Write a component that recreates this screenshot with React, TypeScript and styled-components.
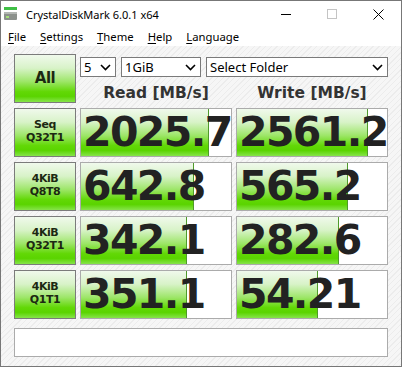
import React from "react"
import styled, { createGlobalStyle } from "styled-components"

const GlobalStyle = createGlobalStyle`
  html, body {
    margin: 0;
    padding: 0;
    background: #ffffff;
  }
  * {
    box-sizing: border-box;
  }
`

const Window = styled.div`
  width: 402px;
  height: 367px;
  border: 1px solid #777777;
  display: flex;
  flex-direction: column;
  background: #ffffff;
  font-family: "Noto Sans", "DejaVu Sans", sans-serif;
  overflow: hidden;
`

const TitleBar = styled.div`
  height: 26px;
  display: flex;
  align-items: center;
  padding-left: 3px;
`

const Title = styled.span`
  font-size: 11px;
  color: #000;
  margin-left: 8px;
  white-space: nowrap;
`

const Controls = styled.div`
  margin-left: auto;
  display: flex;
  height: 100%;
`

const CtrlButton = styled.div`
  width: 46px;
  height: 100%;
  display: flex;
  align-items: center;
  justify-content: center;
`

const MenuBar = styled.div`
  height: 19px;
  display: flex;
  align-items: center;
`

const MenuItem = styled.span`
  font-size: 11.3px;
  color: #000;
  padding: 0 7px;
  line-height: 19px;
  u {
    text-decoration: underline;
    text-underline-offset: 2px;
  }
`

const Content = styled.div`
  flex: 1;
  padding: 8px 12px 0 13px;
  background: repeating-linear-gradient(
    135deg,
    #f6f6f6 0px,
    #f6f6f6 3px,
    #ececec 3px,
    #ececec 4px
  );
`

const Grid = styled.div`
  display: grid;
  grid-template-columns: 62px 152px 152px;
  grid-auto-rows: 49px;
  column-gap: 4px;
  row-gap: 5px;
`

const greenGrad = `linear-gradient(
  to bottom,
  #f0f9ec 0%,
  #d8f3c8 28%,
  #9ee66a 56%,
  #62d806 78%,
  #5ad400 88%,
  #86e44a 100%
)`

const GreenButton = styled.div<{ $big?: boolean }>`
  border: 1px solid #7b7b7b;
  background: ${greenGrad};
  display: flex;
  flex-direction: column;
  align-items: center;
  justify-content: center;
  color: #1c2812;
  font-family: "DejaVu Sans", sans-serif;
  font-weight: bold;
  font-size: ${(p) => (p.$big ? "15px" : "11px")};
  letter-spacing: ${(p) => (p.$big ? "-0.5px" : "-0.4px")};
  line-height: 13px;
  padding-bottom: ${(p) => (p.$big ? "0" : "3px")};
`

const HeaderArea = styled.div`
  grid-column: 2 / 4;
  display: flex;
  flex-direction: column;
`

const SelectRow = styled.div`
  display: flex;
  gap: 5px;
  margin-top: 3px;
`

const Select = styled.div<{ $w: number }>`
  width: ${(p) => p.$w}px;
  height: 20px;
  border: 1px solid #7a7a7a;
  background: #fff;
  display: flex;
  align-items: center;
  padding: 0 4px 0 3px;
  font-size: 13px;
  color: #000;
  span {
    flex: 1;
    white-space: nowrap;
  }
`

const HeaderRow = styled.div`
  display: grid;
  grid-template-columns: 152px 152px;
  column-gap: 4px;
  margin-top: 6px;
`

const Header = styled.div`
  text-align: center;
  font-family: "DejaVu Sans", sans-serif;
  font-weight: bold;
  font-size: 15.5px;
  color: #333333;
  line-height: 20px;
`

const ValueBox = styled.div`
  position: relative;
  border: 1px solid #ababab;
  background: #ffffff;
  overflow: hidden;
  display: flex;
  align-items: center;
`

const Bar = styled.div`
  position: absolute;
  left: 0;
  top: 0;
  bottom: 0;
  background: ${greenGrad};
  border-right: 1px solid #4f9a2a;
`

const Value = styled.span`
  position: relative;
  font-family: "DejaVu Sans", sans-serif;
  font-weight: bold;
  font-size: 41px;
  letter-spacing: -1.6px;
  color: #222222;
  padding-left: 2px;
  white-space: nowrap;
  line-height: 1;
`

const Comment = styled.div`
  margin-top: 9px;
  height: 29px;
  width: 374px;
  border: 1px solid #ababab;
  background: #fff;
`

const Chevron = () => (
  <svg width="11" height="7" viewBox="0 0 11 7">
    <polyline points="1,1 5.5,5.5 10,1" fill="none" stroke="#000" strokeWidth="1.6" />
  </svg>
)

const AppIcon = () => (
  <svg width="14" height="14" viewBox="0 0 14 14">
    <rect x="0" y="0" width="13" height="3" fill="#3fbf45" />
    <rect x="0" y="5" width="13" height="8" rx="1" fill="#8c918c" />
    <rect x="0" y="5" width="13" height="2" fill="#b4b8b4" />
    <rect x="2" y="9" width="3" height="2" fill="#a4e07a" />
  </svg>
)

const rows = [
  { label: ["Seq", "Q32T1"], read: "2025.7", rw: 128, write: "2561.2", ww: 131 },
  { label: ["4KiB", "Q8T8"], read: "642.8", rw: 113, write: "565.2", ww: 111 },
  { label: ["4KiB", "Q32T1"], read: "342.1", rw: 106, write: "282.6", ww: 102 },
  { label: ["4KiB", "Q1T1"], read: "351.1", rw: 106, write: "54.21", ww: 81 },
]

const Result = ({ value, width }: { value: string; width: number }) => (
  <ValueBox>
    <Bar style={{ width }} />
    <Value>{value}</Value>
  </ValueBox>
)

export default function App() {
  return (
    <>
      <GlobalStyle />
      <Window>
        <TitleBar>
          <AppIcon />
          <Title>CrystalDiskMark 6.0.1 x64</Title>
          <Controls>
            <CtrlButton>
              <svg width="10" height="1" viewBox="0 0 10 1">
                <rect width="10" height="1" fill="#000" />
              </svg>
            </CtrlButton>
            <CtrlButton>
              <svg width="10" height="10" viewBox="0 0 10 10">
                <rect x="0.5" y="0.5" width="9" height="9" fill="none" stroke="#c4c4c4" />
              </svg>
            </CtrlButton>
            <CtrlButton>
              <svg width="11" height="11" viewBox="0 0 11 11">
                <path d="M0.5 0.5 L10.5 10.5 M10.5 0.5 L0.5 10.5" stroke="#000" strokeWidth="1" />
              </svg>
            </CtrlButton>
          </Controls>
        </TitleBar>
        <MenuBar>
          <MenuItem><u>F</u>ile</MenuItem>
          <MenuItem><u>S</u>ettings</MenuItem>
          <MenuItem><u>T</u>heme</MenuItem>
          <MenuItem><u>H</u>elp</MenuItem>
          <MenuItem><u>L</u>anguage</MenuItem>
        </MenuBar>
        <Content>
          <Grid>
            <GreenButton $big>All</GreenButton>
            <HeaderArea>
              <SelectRow>
                <Select $w={36}><span>5</span><Chevron /></Select>
                <Select $w={80}><span>1GiB</span><Chevron /></Select>
                <Select $w={182}><span>Select Folder</span><Chevron /></Select>
              </SelectRow>
              <HeaderRow>
                <Header>Read [MB/s]</Header>
                <Header>Write [MB/s]</Header>
              </HeaderRow>
            </HeaderArea>
            {rows.map((r) => (
              <React.Fragment key={r.label.join("")}>
                <GreenButton>
                  <span>{r.label[0]}</span>
                  <span>{r.label[1]}</span>
                </GreenButton>
                <Result value={r.read} width={r.rw} />
                <Result value={r.write} width={r.ww} />
              </React.Fragment>
            ))}
          </Grid>
          <Comment />
        </Content>
      </Window>
    </>
  )
}
